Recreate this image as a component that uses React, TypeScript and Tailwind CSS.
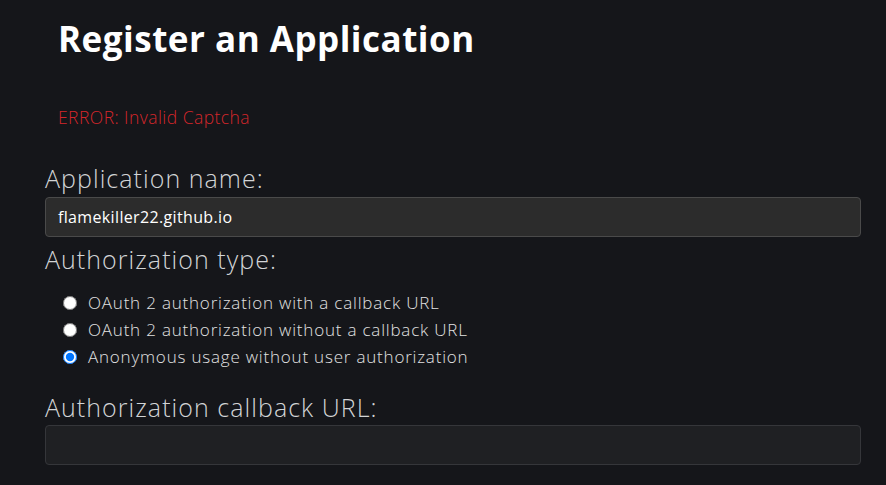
import React from "react";

export default function App() {
  const options = [
    "OAuth 2 authorization with a callback URL",
    "OAuth 2 authorization without a callback URL",
    "Anonymous usage without user authorization",
  ];
  return (
    <div
      className="w-[886px] h-[485px] overflow-hidden bg-[#15161a] text-[#e6e6e6]"
      style={{ fontFamily: '"Open Sans", sans-serif' }}
    >
      <div className="pl-[45px] pr-[25px]">
        <h1 className="pl-[13px] pt-[15px] text-[35px] leading-[48px] tracking-[0.5px] font-bold text-white">
          Register an Application
        </h1>
        <p className="pl-[13px] mt-[42px] text-[17.5px] leading-[24px] tracking-[0.45px] font-light text-[#d4262b]">
          ERROR: Invalid Captcha
        </p>
        <label className="block mt-[34px] text-[25px] leading-[30px] tracking-[1.05px] font-light text-[#d2d4d6]">
          Application name:
        </label>
        <div className="mt-[4px] h-[40px] rounded-[4px] border border-[#4a4a4a] bg-[#2c2c2c] pl-[12px] flex items-center text-[16px] tracking-[0.35px] text-white">
          flamekiller22.github.io
        </div>
        <label className="block mt-[7px] text-[25px] leading-[30px] tracking-[1.05px] font-light text-[#d2d4d6]">
          Authorization type:
        </label>
        <div className="mt-[15px] pl-[18px] flex flex-col">
          {options.map((o, i) => (
            <label key={o} className="flex items-center h-[27px] gap-[11px]">
              <input
                type="radio"
                name="authtype"
                defaultChecked={i === 2}
                className="m-0 w-[14px] h-[14px]"
              />
              <span className="text-[17px] tracking-[0.8px] font-light text-[#e2e2e2]">{o}</span>
            </label>
          ))}
        </div>
        <label className="block mt-[22px] text-[25px] leading-[30px] tracking-[1.05px] font-light text-[#d2d4d6]">
          Authorization callback URL:
        </label>
        <div className="mt-[3px] h-[40px] rounded-[4px] border border-[#35363a] bg-[#1f2023]" />
      </div>
    </div>
  );
}
